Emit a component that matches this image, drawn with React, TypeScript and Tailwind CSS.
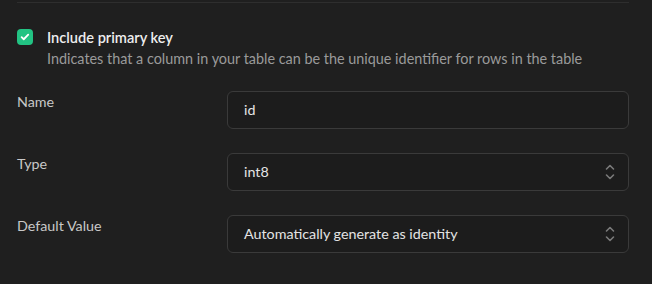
const font = { fontFamily: "Lato, Inter, 'Noto Sans', sans-serif" };

function UpDown() {
  return (
    <svg viewBox="0 0 10 16" className="h-[16px] w-[10px]" fill="none">
      <path
        d="M1.5 5L5 1.5L8.5 5M1.5 11L5 14.5L8.5 11"
        stroke="#7a7a7a"
        strokeWidth="1.6"
        strokeLinecap="round"
        strokeLinejoin="round"
      />
    </svg>
  );
}

function Field({
  label,
  value,
  select,
}: {
  label: string;
  value: string;
  select?: boolean;
}) {
  return (
    <div className="flex">
      <div className="w-[210px] pt-[1px] text-[14.3px] leading-[20px] text-[#c8c8c8]">
        {label}
      </div>
      <div className="flex h-[38px] w-[402px] items-center justify-between rounded-[6px] border border-[#3a3a3a] bg-[#1c1c1c] pl-[16px] pr-[13px]">
        <span className="text-[14.3px] text-[#e4e4e4]">{value}</span>
        {select && <UpDown />}
      </div>
    </div>
  );
}

export default function App() {
  return (
    <div className="h-[284px] w-[652px] bg-[#1f1f1f]" style={font}>
      <div className="px-[17px] pr-[23px] pt-[2px]">
        <div className="h-px bg-[#2e2e2e]" />
        <div className="mt-[26px] flex gap-[14px]">
          <div className="flex h-[16px] w-[16px] items-center justify-center rounded-[4px] bg-[#22c383]">
            <svg viewBox="0 0 16 16" className="h-[12px] w-[12px]">
              <path
                d="M3.5 8.3l2.8 2.7 6-6.2"
                fill="none"
                stroke="white"
                strokeWidth="2.4"
                strokeLinecap="round"
                strokeLinejoin="round"
              />
            </svg>
          </div>
          <div>
            <div className="text-[14.6px] font-semibold leading-[18px] text-[#ededed]">
              Include primary key
            </div>
            <div className="mt-[2px] text-[14.4px] leading-[20px] text-[#9a9a9a]">
              Indicates that a column in your table can be the unique identifier for rows in the table
            </div>
          </div>
        </div>
        <div className="mt-[22px] flex flex-col gap-[24px]">
          <Field label="Name" value="id" />
          <Field label="Type" value="int8" select />
          <Field label="Default Value" value="Automatically generate as identity" select />
        </div>
      </div>
    </div>
  );
}
